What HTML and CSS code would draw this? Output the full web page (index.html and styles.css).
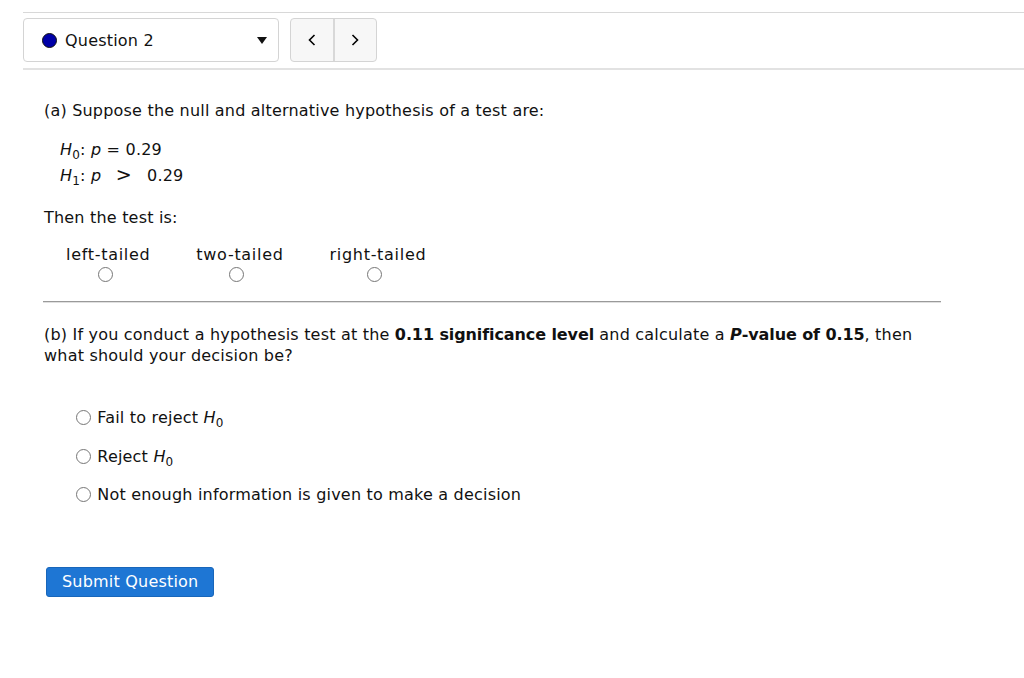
FILE: index.html
```html
<!DOCTYPE html>
<html lang="en">
<head>
<meta charset="UTF-8">
<meta name="viewport" content="width=device-width, initial-scale=1.0">
<title>Question 2</title>
<link rel="stylesheet" href="styles.css">
</head>
<body>

<!-- Question navigation -->
<div class="question-nav">
  <div class="question-select">
    <span class="status-dot"></span>
    <span class="select-label">Question 2</span>
    <span class="select-arrow"></span>
  </div>
  <div class="nav-buttons">
    <button class="nav-button" aria-label="Previous question">
      <svg width="8" height="12" viewBox="0 0 8 12"><polyline points="6.5,1 1.5,6 6.5,11" fill="none" stroke="#000" stroke-width="1.6"/></svg>
    </button>
    <button class="nav-button" aria-label="Next question">
      <svg width="8" height="12" viewBox="0 0 8 12"><polyline points="1.5,1 6.5,6 1.5,11" fill="none" stroke="#000" stroke-width="1.6"/></svg>
    </button>
  </div>
</div>

<div class="question">
  <!-- Part (a) -->
  <p class="intro">(a) Suppose the null and alternative hypothesis of a test are:</p>
  <div class="hypotheses">
    <div class="math-line"><i>H</i><sub>0</sub>: <i>p</i> = 0.29</div>
    <div class="math-line"><i>H</i><sub>1</sub>: <i>p</i> <span class="rel">&gt;</span> 0.29</div>
  </div>
  <p class="intro-test">Then the test is:</p>
  <div class="tail-choices">
    <label class="tail-choice">left-tailed<input type="radio" name="tail" class="radio"></label>
    <label class="tail-choice">two-tailed<input type="radio" name="tail" class="radio"></label>
    <label class="tail-choice">right-tailed<input type="radio" name="tail" class="radio"></label>
  </div>

  <hr class="divider">

  <!-- Part (b) -->
  <p class="part-b">(b) If you conduct a hypothesis test at the <b>0.11 significance level</b> and calculate a <b><i>P</i>-value of 0.15</b>, then what should your decision be?</p>

  <ul class="options">
    <li><label><input type="radio" name="decision" class="radio"> Fail to reject <i>H</i><sub>0</sub></label></li>
    <li><label><input type="radio" name="decision" class="radio"> Reject <i>H</i><sub>0</sub></label></li>
    <li><label><input type="radio" name="decision" class="radio"> Not enough information is given to make a decision</label></li>
  </ul>

  <button class="submit-button">Submit Question</button>
</div>

</body>
</html>
```

FILE: styles.css
```css
body {
  font-family: "DejaVu Sans", sans-serif;
  font-size: 16px;
  line-height: 21px;
  letter-spacing: 0.2px;
  color: #111;
  margin: 0;
  padding: 0;
  background: #fff;
}

b {
  letter-spacing: -0.1px;
}

/* Question navigation bar */
.question-nav {
  display: flex;
  gap: 11px;
  margin: 12px 0 0 23px;
  padding: 5px 0 6px;
  border-top: 1px solid #d8d8d8;
  border-bottom: 2px solid #e2e2e2;
}

.question-select {
  display: flex;
  align-items: center;
  box-sizing: border-box;
  width: 256px;
  height: 44px;
  padding: 0 11px 0 18px;
  border: 1px solid #d4d4d4;
  border-radius: 4px;
  background: #fff;
}

.status-dot {
  width: 13px;
  height: 13px;
  border: 1px solid #111;
  border-radius: 50%;
  background: #0000a8;
}

.select-label {
  margin-left: 8px;
  flex: 1;
}

.select-arrow {
  width: 0;
  height: 0;
  border-left: 5px solid transparent;
  border-right: 5px solid transparent;
  border-top: 7px solid #111;
}

.nav-buttons {
  display: flex;
  box-sizing: border-box;
  width: 87px;
  height: 44px;
  border: 1px solid #d4d4d4;
  border-radius: 4px;
  background: #f7f7f7;
  overflow: hidden;
}

.nav-button {
  flex: 1;
  border: none;
  background: none;
  display: flex;
  align-items: center;
  justify-content: center;
  padding: 0;
  cursor: pointer;
}

.nav-button + .nav-button {
  border-left: 2px solid #d8d8d8;
}

/* Question body */
.question {
  margin-left: 44px;
  width: 897px;
}

.intro {
  margin: 30px 0 0;
}

.hypotheses {
  margin: 16px 0 0 16px;
}

.math-line {
  line-height: 26px;
}

sub {
  font-size: 12px;
  line-height: 0;
  vertical-align: -4px;
}

.rel {
  font-family: "DejaVu Serif", serif;
  font-size: 19px;
  line-height: 0;
  margin: 0 10px 0 9px;
}

.intro-test {
  margin: 18px 0 0;
}

.tail-choices {
  display: flex;
  gap: 46px;
  margin: 16px 0 0 22px;
}

.tail-choice {
  display: flex;
  flex-direction: column;
  align-items: center;
  letter-spacing: 0.7px;
}

.radio {
  appearance: none;
  box-sizing: border-box;
  width: 15px;
  height: 15px;
  margin: 0;
  border: 1px solid #767676;
  border-radius: 50%;
  background: #fff;
  vertical-align: -2px;
}

.tail-choice .radio {
  margin: 2px 6px 0 0;
}

.divider {
  margin: 19px 0 0 -1px;
  border: none;
  border-top: 1px solid #9a9a9a;
  border-bottom: 1px solid #e0e0e0;
  height: 0;
}

.part-b {
  margin: 21px 0 0;
}

.options {
  list-style: none;
  margin: 41px 0 0 32px;
  padding: 0;
}

.options li {
  margin-bottom: 17.5px;
}

.options .radio {
  margin-right: 1px;
}

.submit-button {
  margin: 44px 0 0 2px;
  padding: 0 15px;
  height: 30px;
  font-family: inherit;
  font-size: 16px;
  letter-spacing: 0.2px;
  color: #fff;
  background-color: #1e76d4;
  border: 1px solid #1866ba;
  border-radius: 3px;
  cursor: pointer;
}
```
